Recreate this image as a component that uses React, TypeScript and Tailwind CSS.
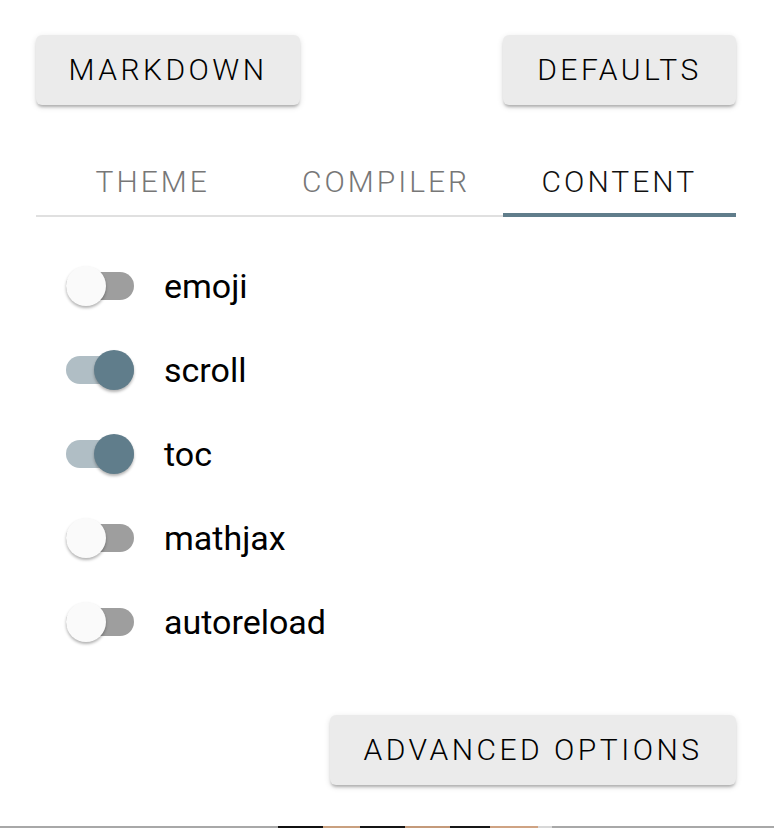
import { useState } from "react";

const tabs = ["THEME", "COMPILER", "CONTENT"];

const initialOptions = [
  { name: "emoji", on: false },
  { name: "scroll", on: true },
  { name: "toc", on: true },
  { name: "mathjax", on: false },
  { name: "autoreload", on: false },
];

function RaisedButton({ label, width }: { label: string; width: string }) {
  return (
    <button
      className={`${width} h-[70px] rounded-[6px] bg-[#ebebeb] pb-[2px] text-[30px] font-light tracking-[3.5px] text-black shadow-[0_3px_3px_-1px_rgba(0,0,0,0.25),0_2px_6px_0_rgba(0,0,0,0.12)]`}
    >
      {label}
    </button>
  );
}

function Toggle({ on, onClick }: { on: boolean; onClick: () => void }) {
  return (
    <button onClick={onClick} className="relative h-[40px] w-[68px] shrink-0">
      <span
        className={`absolute left-0 top-[6px] h-[28px] w-[68px] rounded-full ${
          on ? "bg-[#b0bec5]" : "bg-[#9e9e9e]"
        }`}
      />
      <span
        className={`absolute top-0 h-[40px] w-[40px] rounded-full shadow-[0_2px_3px_rgba(0,0,0,0.3)] ${
          on ? "left-[28px] bg-[#607d8b]" : "left-0 bg-[#fafafa]"
        }`}
      />
    </button>
  );
}

export default function App() {
  const [active, setActive] = useState(2);
  const [options, setOptions] = useState(initialOptions);

  const flip = (i: number) =>
    setOptions((o) => o.map((x, j) => (j === i ? { ...x, on: !x.on } : x)));

  return (
    <div className="flex h-[828px] w-[774px] flex-col overflow-hidden bg-white font-['Roboto',sans-serif]">
      <div className="ml-[36px] w-[700px] pt-[35px]">
        {/* Top buttons */}
        <div className="flex justify-between">
          <RaisedButton label="MARKDOWN" width="w-[264px]" />
          <RaisedButton label="DEFAULTS" width="w-[233px]" />
        </div>

        {/* Tabs */}
        <div className="mt-[16px] flex border-b-2 border-[#e0e0e0]">
          {tabs.map((t, i) => (
            <button
              key={t}
              onClick={() => setActive(i)}
              className={`relative flex h-[94px] flex-1 items-center justify-center pt-[26px] text-[30px] font-light tracking-[3px] ${
                active === i ? "text-[#111]" : "text-[#777]"
              }`}
            >
              {t}
              {active === i && (
                <span className="absolute -bottom-[2px] left-0 h-[4px] w-full bg-[#607d8b]" />
              )}
            </button>
          ))}
        </div>

        {/* Options */}
        <div className="mt-[27px] flex flex-col pl-[30px]">
          {options.map((o, i) => (
            <div key={o.name} className="flex h-[84px] items-center gap-[30px]">
              <Toggle on={o.on} onClick={() => flip(i)} />
              <span className="text-[34px] text-black">{o.name}</span>
            </div>
          ))}
        </div>

        <div className="mt-[51px] flex justify-end">
          <RaisedButton label="ADVANCED OPTIONS" width="w-[406px]" />
        </div>
      </div>

      {/* Edge of the next panel */}
      <div className="mt-auto flex h-[2px] w-full bg-[#a8a8a8]">
        <div className="ml-[278px] flex">
          <span className="w-[45px] bg-[#111]" />
          <span className="w-[37px] bg-[#c9a07f]" />
          <span className="w-[45px] bg-[#151515]" />
          <span className="w-[45px] bg-[#c49a7a]" />
          <span className="w-[40px] bg-[#181818]" />
          <span className="w-[48px] bg-[#cfa383]" />
          <span className="w-[14px] bg-[#d8d8d8]" />
        </div>
      </div>
    </div>
  );
}
